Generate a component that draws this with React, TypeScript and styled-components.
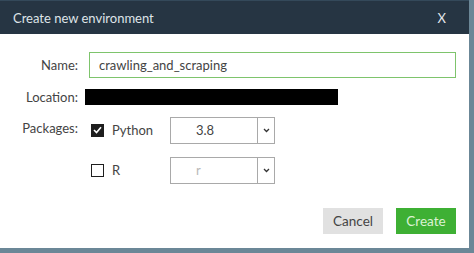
import React from 'react';
import styled, { createGlobalStyle } from 'styled-components';

const GlobalStyle = createGlobalStyle`
  html, body {
    margin: 0;
    padding: 0;
    background: #6b8797;
  }
  body {
    font-family: Lato, 'Open Sans', sans-serif;
    width: 474px;
    height: 253px;
    overflow: hidden;
  }
`;

const Dialog = styled.div`
  width: 469px;
  height: 248px;
  background: #ffffff;
  display: flex;
  flex-direction: column;
`;

const Header = styled.div`
  height: 33px;
  border-top: 1px solid #34495a;
  background: #263543;
  display: flex;
  align-items: center;
  justify-content: space-between;
  padding: 0 23px 0 13px;
  color: #dfe4e8;
  font-size: 13px;
`;

const Close = styled.span`
  font-size: 13px;
  color: #e4e8ec;
`;

const Body = styled.div`
  flex: 1;
  display: flex;
  flex-direction: column;
  padding-top: 18px;
`;

const Row = styled.div<{ $gap: number; $height: number; $top?: boolean }>`
  display: flex;
  align-items: ${(p) => (p.$top ? 'flex-start' : 'center')};
  height: ${(p) => p.$height}px;
  margin-bottom: ${(p) => p.$gap}px;
`;

const Label = styled.div<{ $shift?: number }>`
  width: 78px;
  text-align: right;
  font-size: 13px;
  color: #444;
  flex-shrink: 0;
  margin-top: ${(p) => p.$shift || 0}px;
`;

const TextInput = styled.div`
  margin-left: 11px;
  width: 367px;
  height: 26px;
  box-sizing: border-box;
  border: 1.5px solid #7ec46c;
  display: flex;
  align-items: center;
  padding-left: 9px;
  font-size: 13px;
  color: #444;
`;

const Redacted = styled.div`
  margin-left: 7px;
  width: 253px;
  height: 16px;
  background: #000;
`;

const PackageList = styled.div`
  display: flex;
  flex-direction: column;
  gap: 14px;
  margin-left: 13px;
`;

const PackageRow = styled.div`
  display: flex;
  align-items: center;
  height: 26px;
`;

const Box = styled.span<{ $checked?: boolean }>`
  width: 13px;
  height: 13px;
  box-sizing: border-box;
  border: 1.5px solid #1e1e1e;
  background: ${(p) => (p.$checked ? '#1e1e1e' : '#fff')};
  display: flex;
  align-items: center;
  justify-content: center;
`;

const PkgName = styled.span`
  width: 58px;
  margin-left: 8px;
  font-size: 13px;
  color: #444;
`;

const Select = styled.div<{ $muted?: boolean }>`
  width: 105px;
  height: 27px;
  box-sizing: border-box;
  border: 1px solid #a9a9a9;
  display: flex;
  font-size: 13px;
  color: ${(p) => (p.$muted ? '#b8b8b8' : '#444')};
`;

const SelectValue = styled.div`
  flex: 1;
  display: flex;
  align-items: center;
  padding-left: 25px;
`;

const SelectArrow = styled.div`
  width: 16px;
  border-left: 1px solid #a9a9a9;
  display: flex;
  align-items: center;
  justify-content: center;
`;

const Footer = styled.div`
  display: flex;
  justify-content: flex-end;
  gap: 13px;
  padding-right: 13px;
  margin-top: 25px;
`;

const Button = styled.div<{ $primary?: boolean }>`
  width: 60px;
  height: 26px;
  display: flex;
  align-items: center;
  justify-content: center;
  font-size: 13.5px;
  background: ${(p) => (p.$primary ? '#3eb034' : '#e1e1e1')};
  color: ${(p) => (p.$primary ? '#dcf2d4' : '#444')};
`;

const Chevron = () => (
  <svg width="7" height="5" viewBox="0 0 7 5">
    <path d="M1 1 L3.5 3.5 L6 1" fill="none" stroke="#333" strokeWidth="1.3" />
  </svg>
);

const Check = () => (
  <svg width="9" height="8" viewBox="0 0 9 8">
    <path d="M1 4 L3.5 6.5 L8 1.2" fill="none" stroke="#fff" strokeWidth="1.6" />
  </svg>
);

export default function App() {
  return (
    <>
      <GlobalStyle />
      <Dialog>
        <Header>
          <span>Create new environment</span>
          <Close>X</Close>
        </Header>
        <Body>
          <Row $height={26} $gap={11}>
            <Label>Name:</Label>
            <TextInput>crawling_and_scraping</TextInput>
          </Row>
          <Row $height={16} $gap={12}>
            <Label>Location:</Label>
            <Redacted />
          </Row>
          <Row $height={66} $gap={0} $top>
            <Label $shift={3}>Packages:</Label>
            <PackageList>
              <PackageRow>
                <Box $checked>
                  <Check />
                </Box>
                <PkgName>Python</PkgName>
                <Select>
                  <SelectValue>3.8</SelectValue>
                  <SelectArrow>
                    <Chevron />
                  </SelectArrow>
                </Select>
              </PackageRow>
              <PackageRow>
                <Box />
                <PkgName>R</PkgName>
                <Select $muted>
                  <SelectValue>r</SelectValue>
                  <SelectArrow>
                    <Chevron />
                  </SelectArrow>
                </Select>
              </PackageRow>
            </PackageList>
          </Row>
          <Footer>
            <Button>Cancel</Button>
            <Button $primary>Create</Button>
          </Footer>
        </Body>
      </Dialog>
    </>
  );
}
